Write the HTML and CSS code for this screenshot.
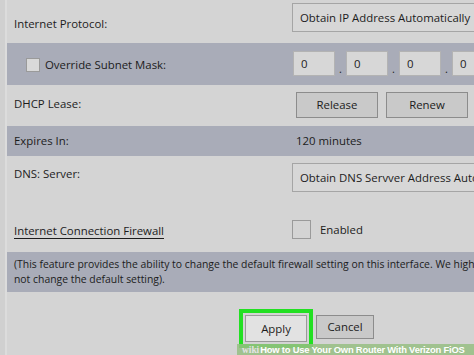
FILE: index.html
```html
<!DOCTYPE html>
<html>
<head>
<meta charset="utf-8">
<link rel="stylesheet" href="styles.css">
</head>
<body>
<div class="page">
  <div class="row r1 light">
    <div class="label l1">Internet Protocol:</div>
    <div class="select s1">Obtain IP Address Automatically</div>
  </div>
  <div class="row r2 dark">
    <div class="label l2"><span class="cb small"></span>Override Subnet Mask:</div>
    <div class="ip">
      <div class="oct">0</div><span class="dot">.</span>
      <div class="oct">0</div><span class="dot">.</span>
      <div class="oct">0</div><span class="dot">.</span>
      <div class="oct">0</div>
    </div>
  </div>
  <div class="row r3 light">
    <div class="label l3">DHCP Lease:</div>
    <div class="btns">
      <div class="btn wide">Release</div>
      <div class="btn wide">Renew</div>
    </div>
  </div>
  <div class="row r4 dark">
    <div class="label l4">Expires In:</div>
    <div class="val">120 minutes</div>
  </div>
  <div class="block r5 light">
    <div class="row sub1">
      <div class="label l5">DNS: Server:</div>
      <div class="select s2">Obtain DNS Servver Address Automatically</div>
    </div>
    <div class="row sub2">
      <div class="label l6"><span class="ul">Internet Connection Firewall</span></div>
      <div class="check"><span class="cb big"></span>Enabled</div>
    </div>
  </div>
  <div class="note dark">(This feature provides the ability to change the default firewall setting on this interface. We highly recommend that you do<br>not change the default setting).</div>
  <div class="actions">
    <div class="apply-ring"><div class="btn apply">Apply</div></div>
    <div class="btn cancel">Cancel</div>
  </div>
</div>
<div class="wm"><span class="wiki">wiki</span>How to Use Your Own Router With Verizon FiOS</div>
</body>
</html>
```
FILE: styles.css
```css
html, body {
  margin: 0;
  padding: 0;
  width: 474px;
  height: 355px;
  overflow: hidden;
  background: #d0d0d0;
  font-family: "Open Sans", "Liberation Sans", sans-serif;
  font-size: 11.4px;
  color: #1c1c1c;
  position: relative;
}
.page {
  margin-left: 5px;
  border-left: 2px solid #dcdcdc;
  width: 600px;
  height: 355px;
  background: #d4d4d4;
}
.row { display: flex; align-items: flex-start; }
.light { background: #d4d4d4; }
.dark { background: #a9acb8; }
.label {
  width: 285px;
  box-sizing: border-box;
  padding-left: 7px;
  line-height: 16px;
  flex: none;
}
.r1 { height: 43px; }
.l1 { margin-top: 16px; }
.select {
  box-sizing: border-box;
  border: 1px solid #a5a5a5;
  background: #d7d7d7;
  height: 29px;
  line-height: 27px;
  padding-left: 7px;
  width: 260px;
  white-space: nowrap;
}
.s1 { margin-top: 3px; }
.r2 { height: 42px; }
.l2 { margin-top: 14px; display: flex; align-items: center; padding-left: 19px; }
.cb {
  display: inline-block;
  box-sizing: border-box;
  border: 1px solid #9a9a9a;
  background: #d9d9d9;
  flex: none;
}
.cb.small { width: 14px; height: 14px; margin-right: 5px; }
.ip { display: flex; align-items: flex-end; margin-top: 8px; margin-left: 1px; }
.oct {
  box-sizing: border-box;
  width: 42px;
  height: 25px;
  line-height: 23px;
  border: 1px solid #b3b3b3;
  background: #d7d7d7;
  padding-left: 7px;
}
.dot { width: 11px; text-align: center; line-height: 14px; font-size: 11px; }
.r3 { height: 41px; }
.l3 { margin-top: 11px; }
.btns { display: flex; gap: 8px; margin-top: 7px; margin-left: 4px; }
.btn {
  box-sizing: border-box;
  border: 1px solid #8c8c8c;
  background: #c9c9c9;
  text-align: center;
  height: 26px;
  line-height: 24px;
}
.btn.wide { width: 82px; }
.r4 { height: 30px; }
.l4 { margin-top: 7px; }
.val { margin-top: 7px; line-height: 16px; padding-left: 4px; }
.r5 { height: 96px; }
.sub1 { height: 55px; }
.l5 { margin-top: 10px; }
.s2 { margin-top: 7px; }
.l6 { margin-top: 12px; }
.ul { text-decoration: underline; text-underline-offset: 3px; }
.check { display: flex; align-items: center; margin-top: 9px; }
.cb.big { width: 19px; height: 19px; margin-right: 9px; background: #d4d4d4; }
.note {
  height: 40px;
  box-sizing: border-box;
  padding: 5px 0 0 7px;
  font-size: 10.4px;
  line-height: 15px;
  width: 600px;
  white-space: nowrap;
}
.actions { display: flex; align-items: flex-start; padding-left: 232px; padding-top: 17px; }
.apply-ring {
  border: 4px solid #22e022;
  padding: 2px;
  background: #d4d4d4;
}
.btn.apply { width: 62px; height: 27px; line-height: 25px; background: #e2e2e2; border-color: #9a9a9a; }
.btn.cancel { width: 58px; height: 24px; line-height: 22px; margin-top: 6px; margin-left: 3px; }
.wm {
  position: absolute;
  left: 237px;
  bottom: 0;
  width: 237px;
  height: 11px;
  background: rgba(150, 190, 130, 0.85);
  color: #fff;
  font-family: "Liberation Sans", sans-serif;
  font-weight: bold;
  font-size: 9.4px;
  letter-spacing: -0.2px;
  line-height: 11px;
  padding-left: 5px;
  box-sizing: border-box;
  white-space: nowrap;
  overflow: hidden;
}
.wiki { font-family: "Liberation Serif", serif; color: #e4e4e4; font-weight: bold; margin-right: 1px; letter-spacing: 0; }
```
